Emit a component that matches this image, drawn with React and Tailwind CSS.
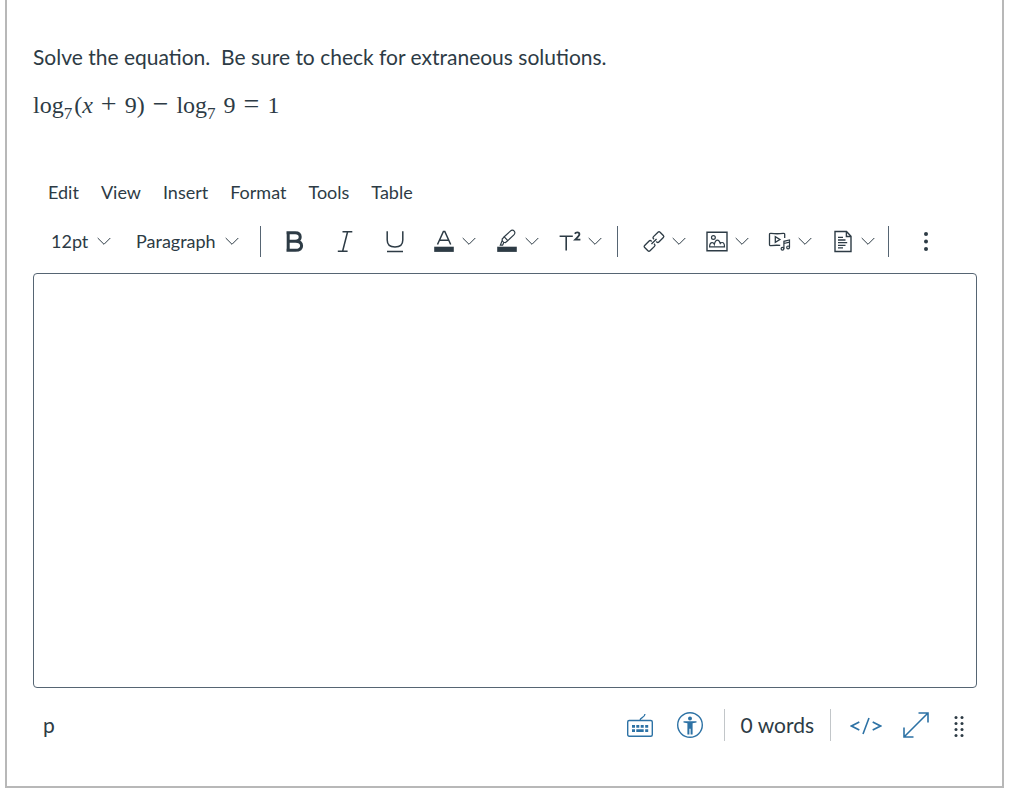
import React, { useState } from "react";

const MENUS = ["Edit", "View", "Insert", "Format", "Tools", "Table"];

function Chevron({ className = "" }) {
  return (
    <svg className={`h-[14px] w-[14px] shrink-0 ${className}`} viewBox="0 0 14 14" fill="none" stroke="currentColor" aria-hidden="true">
      <path d="M0.7 4 7 10.3 13.3 4" strokeWidth={1} />
    </svg>
  );
}

function Icon({ children }) {
  return (
    <svg className="h-6 w-6 shrink-0" viewBox="0 -0.5 24 24" fill="none" stroke="currentColor" strokeWidth={1.4} aria-hidden="true">
      {children}
    </svg>
  );
}

const BoldIcon = () => (
  <Icon>
    <path d="M5.2 3.2v17.6M3.5 3.2h8.7c3 0 5 1.5 5 4.3s-2 4.2-5 4.2H5.2M12.4 11.7c3.7 0 6.2 1.5 6.2 4.5s-2.5 4.6-6.2 4.6H3.5" strokeWidth={3} />
  </Icon>
);

const ItalicIcon = () => (
  <Icon>
    <path d="M9.5 2.3h9.8M4.8 21.7h9.8M14.6 2.3 9.6 21.7" strokeWidth={1.5} />
  </Icon>
);

const UnderlineIcon = () => (
  <Icon>
    <path d="M4.2 1.8v8.6c0 4.6 3 7 7.8 7s7.8-2.4 7.8-7V1.8M4 22h16" strokeWidth={1.5} />
  </Icon>
);

const TextColorIcon = () => (
  <Icon>
    <path d="M5.5 15 11.4 2h1.4L18.700 15M7.500 10.700h9.200" strokeWidth={1.500} />
    <path d="M2.200 17.200h19.600v5.200H2.200z" fill="currentColor" stroke="none" />
  </Icon>
);

const HighlightIcon = () => (
  <Icon>
    <g transform="translate(4.800 15) rotate(-43)" strokeWidth={1.200}>
      <path d="M8.500-2.600h8c2 0 3.200 1.100 3.200 2.600s-1.200 2.600-3.200 2.600h-8z" />
      <path d="M8.500-2.600 5.500-2.400 4.300-1v2l1.200 1.400 3 .2M4.300-1.200 0 .8l1.600 1.600L4.500 1.200" />
    </g>
    <path d="M2.200 17.200h19.600v5.200H2.200z" fill="currentColor" stroke="none" />
  </Icon>
);

const SuperscriptIcon = () => (
  <Icon>
    <path d="M1.600 6.700h13.200M8.200 6.700V21" strokeWidth={1.600} />
    <path d="M16.800 4.300c.6-1 1.500-1.400 2.500-1.400 1.300 0 2.100.7 2.100 1.800 0 1.600-1.700 2.900-4.200 5.400h5.200" strokeWidth={1.800} />
  </Icon>
);

const LinkIcon = () => (
  <Icon>
    <g transform="rotate(-45 12 12)" strokeWidth={1.300}>
      <path d="M13.600 10.400V9.700c0-1 .6-1.500 1.500-1.500h6.300c1 0 1.500.6 1.500 1.500v4.600c0 1-.6 1.500-1.500 1.500h-6.300c-1 0-1.500-.5-1.500-1.500v-.7" />
      <path d="M10.400 10.400V9.700c0-1-.6-1.500-1.500-1.500H2.600c-1 0-1.500.6-1.500 1.500v4.600c0 1 .6 1.500 1.500 1.500h6.300c1 0 1.500-.5 1.500-1.500v-.7" />
      <path d="M8.400 12h7.200" />
    </g>
  </Icon>
);

const ImageIcon = () => (
  <Icon>
    <path d="M2 2.800h20v18.400H2z" />
    <circle cx="8.400" cy="8" r="1.900" strokeWidth={1.200} />
    <path d="M4.600 17.400c0-2.800 1.100-4.200 2.600-4.200 1.200 0 1.700.7 2.100 1.700.6-2.900 1.800-4.300 3.200-4.300 1.500 0 2.300 1.600 2.800 3.400.5-.7 1.100-1 1.800-1 1.600 0 2.400 1.700 2.400 4.400z" strokeWidth={1.200} />
  </Icon>
);

const MediaIcon = () => (
  <Icon>
    <path d="M12.200 15.900c-3.400-.3-6.400-.2-9.200.3-1 .1-1.500-.3-1.500-1.200V5c0-.9.500-1.300 1.500-1.200 4.200.6 8 .6 12.200 0 1-.1 1.500.3 1.500 1.200v3.600" strokeWidth={1.300} />
    <path d="M7.300 7.200v5.600l4.600-2.800z" strokeWidth={1.300} />
    <path d="M15.900 19.200v-7.400l5.600-1.300v7.300M15.900 14l5.600-1.300" strokeWidth={1.200} />
    <circle cx="14.500" cy="19.300" r="1.400" strokeWidth={1.200} />
    <circle cx="20.100" cy="17.900" r="1.400" strokeWidth={1.200} />
  </Icon>
);

const DocumentIcon = () => (
  <Icon>
    <path d="M4 2h11.500l4.500 4.800V22H4zM15.400 2v5H20" />
    <path d="M7 7.800h5M7 10.500h7.500M7 13.200h9.200M7 15.900h7.500M7 18.400h5" strokeWidth={1.300} />
  </Icon>
);

const KeyboardIcon = () => (
  <svg className="h-[26px] w-[26px]" viewBox="0 0 26 26" fill="none" stroke="currentColor" aria-hidden="true">
    <rect x="0.700" y="8.500" width="24.600" height="15.800" rx="1.500" strokeWidth={1.400} />
    <path d="M13 8.500c0-3.800 4.500-2 5-6.500" strokeWidth={1.300} />
    <path d="M5 14.300h3M9.300 14.300h3M13.700 14.300h3M18.200 14.300h3M5 18.700h3M9.300 18.700h7.400M18.200 18.700h3" strokeWidth={2.800} />
  </svg>
);

const AccessibilityIcon = () => (
  <svg className="h-[26px] w-[26px]" viewBox="0 0 26 26" fill="none" stroke="currentColor" aria-hidden="true">
    <circle cx="13" cy="13" r="12.300" strokeWidth={1.400} />
    <circle cx="13" cy="6.500" r="2" fill="currentColor" stroke="none" />
    <path d="M6.500 9.200h13v1.300l-3.900.7v11.300h-2v-5.700h-1.200v5.700h-2V11.200l-3.900-.7z" fill="currentColor" stroke="none" />
  </svg>
);

const CodeIcon = () => (
  <svg className="h-[26px] w-8" viewBox="0 0 32 26" fill="none" stroke="currentColor" aria-hidden="true">
    <path d="M9.300 10 1.500 14l7.800 4M22.700 10l7.800 4-7.800 4M19 6l-6 16" strokeWidth={1.600} />
  </svg>
);

const ExpandIcon = () => (
  <svg className="h-[26px] w-[26px]" viewBox="0 0 26 26" fill="none" stroke="currentColor" aria-hidden="true">
    <path d="M1 25 25 1M15.500 1H25v9.500M1 15.500V25h9.500" strokeWidth={1.600} />
  </svg>
);

function Divider({ className }) {
  return <div className={`h-[31px] w-px shrink-0 bg-[#566573] ${className}`} />;
}

function ToolSelect({ label, options, className }) {
  return (
    <div className={`relative flex h-9 shrink-0 items-center ${className}`}>
      <select aria-label={label} className="h-full w-full appearance-none bg-transparent pl-2 text-lg outline-none">
        {options.map((option) => (
          <option key={option}>{option}</option>
        ))}
      </select>
      <Chevron className="pointer-events-none absolute right-[13px]" />
    </div>
  );
}

function ToolButton({ label, children }) {
  return (
    <button type="button" aria-label={label} className="flex h-9 w-[50px] shrink-0 items-center justify-center hover:bg-gray-100">
      {children}
    </button>
  );
}

function SplitButton({ label, children }) {
  return (
    <button type="button" aria-label={label} aria-haspopup="menu" className="flex h-9 w-[63px] shrink-0 items-center gap-[6px] pl-3 hover:bg-gray-100">
      {children}
      <Chevron />
    </button>
  );
}

function StatusButton({ label, children }) {
  return (
    <button type="button" aria-label={label} className="flex h-9 w-[50px] items-center justify-center text-[#2d72a5]">
      {children}
    </button>
  );
}

function Log7() {
  return (
    <>
      log<sub className="-bottom-[6px] text-[17px]">7</sub>
    </>
  );
}

function Operator({ children }) {
  return <span className="mx-2 text-[28px] leading-none">{children}</span>;
}

function Equation() {
  return (
    <p className="mt-4 h-8 font-['Liberation_Serif',serif] text-2xl leading-8">
      <Log7 />
      <span className="ml-[2px]">(</span>
      <i>x</i>
      <Operator>+</Operator>
      9)
      <Operator>−</Operator>
      <Log7 />
      <span className="ml-2">9</span>
      <Operator>=</Operator>1
    </p>
  );
}

export default function App() {
  const [answer, setAnswer] = useState("");
  const words = answer.trim() ? answer.trim().split(/\s+/).length : 0;

  return (
    <main className="ml-[5px] mr-5 border-2 border-t-0 border-[#b8b8b8] bg-white pb-6 pl-[26px] pr-[25px] pt-[41px] font-['Lato',sans-serif] text-[#2d3b45]">
      <p className="text-[21px] leading-8">Solve the equation.&nbsp; Be sure to check for extraneous solutions.</p>
      <Equation />

      <div role="menubar" className="mt-[54px] flex h-[34px] items-center gap-[22px] pl-[15px] text-lg">
        {MENUS.map((menu) => (
          <button key={menu} type="button" role="menuitem">
            {menu}
          </button>
        ))}
      </div>

      <div role="toolbar" aria-label="Formatting" className="flex h-16 items-center pl-[10px]">
        <ToolSelect label="Font size" options={["12pt", "14pt", "18pt"]} className="mr-1 w-[81px]" />
        <ToolSelect label="Block style" options={["Paragraph", "Heading 2", "Heading 3"]} className="w-[124px]" />
        <Divider className="ml-2 mr-[9px]" />
        <ToolButton label="Bold"><BoldIcon /></ToolButton>
        <ToolButton label="Italic"><ItalicIcon /></ToolButton>
        <ToolButton label="Underline"><UnderlineIcon /></ToolButton>
        <SplitButton label="Text color"><TextColorIcon /></SplitButton>
        <SplitButton label="Background color"><HighlightIcon /></SplitButton>
        <SplitButton label="Superscript"><SuperscriptIcon /></SplitButton>
        <Divider className="ml-2 mr-3" />
        <SplitButton label="Links"><LinkIcon /></SplitButton>
        <SplitButton label="Images"><ImageIcon /></SplitButton>
        <SplitButton label="Media"><MediaIcon /></SplitButton>
        <SplitButton label="Documents"><DocumentIcon /></SplitButton>
        <Divider className="ml-[6px] mr-3" />
        <ToolButton label="More">
          <Icon>
            <g fill="currentColor" stroke="none">
              <circle cx="12" cy="4.500" r="2" />
              <circle cx="12" cy="12" r="2" />
              <circle cx="12" cy="19.500" r="2" />
            </g>
          </Icon>
        </ToolButton>
      </div>

      <textarea
        aria-label="Answer"
        value={answer}
        onChange={(e) => setAnswer(e.target.value)}
        className="block h-[415px] w-full resize-none rounded border border-[#566573] p-3 text-[21px] outline-none"
      />

      <div className="flex h-[74px] items-center pl-[10px] text-[21px]">
        <span className="flex-1">p</span>
        <StatusButton label="Keyboard shortcuts"><KeyboardIcon /></StatusButton>
        <StatusButton label="Accessibility checker"><AccessibilityIcon /></StatusButton>
        <div className="ml-[9px] h-8 w-px bg-[#c2c6c9]" />
        <span className="px-4">{words} words</span>
        <div className="mr-[10px] h-8 w-px bg-[#c2c6c9]" />
        <StatusButton label="Switch to HTML editor"><CodeIcon /></StatusButton>
        <StatusButton label="Fullscreen"><ExpandIcon /></StatusButton>
        <button type="button" aria-label="Resize" className="flex h-9 w-9 items-center justify-center">
          <svg className="h-6 w-3" viewBox="0 0 12 24" fill="currentColor" aria-hidden="true">
            {[5, 11, 17, 23].map((y) => (
              <React.Fragment key={y}>
                <circle cx="3" cy={y - 0.5} r="1.500" />
                <circle cx="9" cy={y - 0.5} r="1.500" />
              </React.Fragment>
            ))}
          </svg>
        </button>
      </div>
    </main>
  );
}
